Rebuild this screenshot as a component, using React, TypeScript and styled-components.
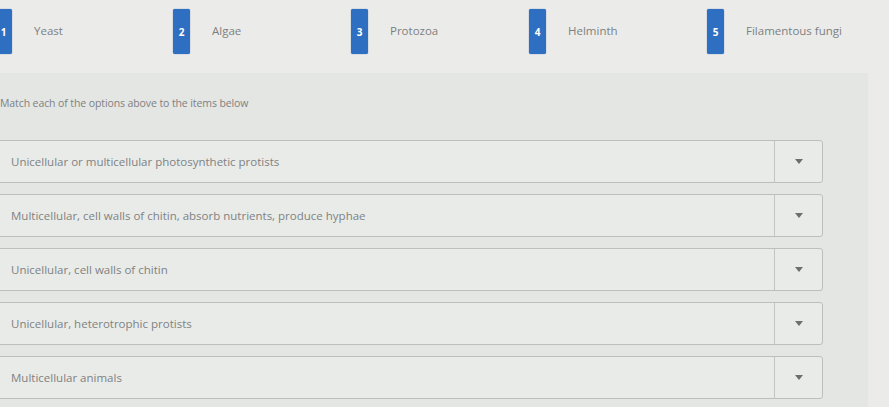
import * as React from "react";
import styled, { createGlobalStyle } from "styled-components";

const Global = createGlobalStyle`
  html, body {
    margin: 0;
    padding: 0;
    background: #ebecea;
    font-family: "Open Sans", "Lato", sans-serif;
    overflow: hidden;
  }
`;

const Page = styled.div`
  width: 889px;
  height: 407px;
  overflow: hidden;
`;

const Options = styled.div`
  display: flex;
  margin-left: -5px;
  padding-top: 9px;
  height: 63px;
  box-sizing: border-box;
`;

const Option = styled.div`
  display: flex;
  align-items: flex-start;
  width: 178px;
  flex: none;
`;

const Badge = styled.div`
  width: 17px;
  height: 45px;
  background: #2f6fc2;
  border-radius: 2px;
  color: #fff;
  font-size: 10px;
  font-weight: 700;
  display: flex;
  align-items: center;
  justify-content: center;
  flex: none;
  box-shadow: 0 0 1px #1d4f94;
`;

const Label = styled.span`
  margin-left: 22px;
  margin-top: 14px;
  font-size: 11.5px;
  color: #7d7f80;
`;

const Panel = styled.div`
  margin-top: 10px;
  width: 868px;
  height: 340px;
  background: #e4e6e3;
  padding-top: 23px;
  box-sizing: border-box;
`;

const Prompt = styled.p`
  margin: 0;
  font-size: 10.5px;
  color: #7f8182;
  letter-spacing: -0.1px;
`;

const Rows = styled.div`
  display: flex;
  flex-direction: column;
  gap: 11px;
  margin-top: 30px;
  margin-left: -6px;
  width: 829px;
`;

const Row = styled.div`
  display: flex;
  height: 43px;
  border: 1px solid #bcbfbd;
  border-radius: 3px;
  background: #e9ebe8;
  box-sizing: border-box;
`;

const RowText = styled.div`
  flex: 1;
  display: flex;
  align-items: center;
  padding-left: 16px;
  font-size: 11.5px;
  color: #808283;
  letter-spacing: 0;
`;

const Toggle = styled.div`
  width: 47px;
  border-left: 1px solid #c2c5c3;
  display: flex;
  align-items: center;
  justify-content: center;
`;

const Caret = () => (
  <svg width="8" height="5" viewBox="0 0 8 5">
    <path d="M0 0h8L4 5z" fill="#6c6e70" />
  </svg>
);

const options = ["Yeast", "Algae", "Protozoa", "Helminth", "Filamentous fungi"];
const items = [
  "Unicellular or multicellular photosynthetic protists",
  "Multicellular, cell walls of chitin, absorb nutrients, produce hyphae",
  "Unicellular, cell walls of chitin",
  "Unicellular, heterotrophic protists",
  "Multicellular animals",
];

export default function App(): React.ReactElement {
  return (
    <Page>
      <Global />
      <Options>
        {options.map((o, i) => (
          <Option key={o}>
            <Badge>{i + 1}</Badge>
            <Label>{o}</Label>
          </Option>
        ))}
      </Options>
      <Panel>
        <Prompt>Match each of the options above to the items below</Prompt>
        <Rows>
          {items.map((t) => (
            <Row key={t}>
              <RowText>{t}</RowText>
              <Toggle>
                <Caret />
              </Toggle>
            </Row>
          ))}
        </Rows>
      </Panel>
    </Page>
  );
}
